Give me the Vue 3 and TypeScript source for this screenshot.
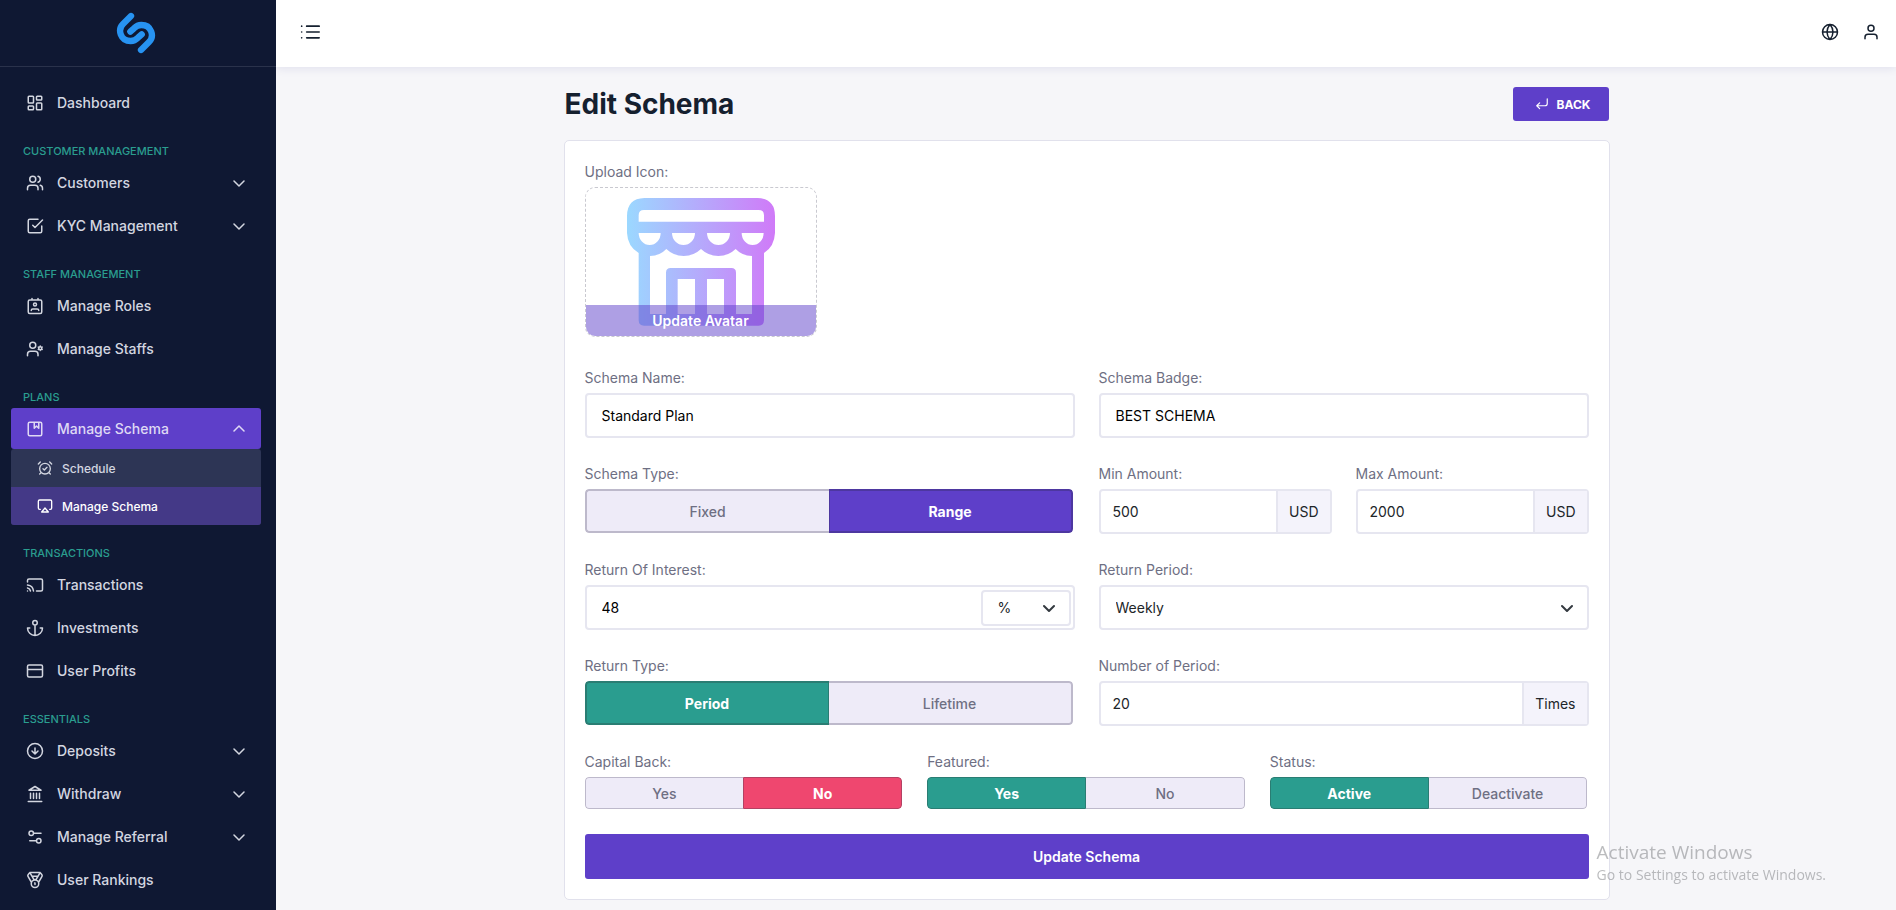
<script setup lang="ts">
import { ref } from 'vue'

interface NavItem {
  label: string
  icon: string
  expandable?: boolean
  open?: boolean
  children?: { label: string; icon: string; active?: boolean }[]
}
interface NavGroup {
  title?: string
  items: NavItem[]
}
interface Option {
  label: string
  tone: 'primary' | 'success' | 'danger'
}

const icons: Record<string, string> = {
  dashboard: 'M4 3h5a1 1 0 0 1 1 1v7a1 1 0 0 1-1 1H4a1 1 0 0 1-1-1V4a1 1 0 0 1 1-1zM15 3h5a1 1 0 0 1 1 1v3a1 1 0 0 1-1 1h-5a1 1 0 0 1-1-1V4a1 1 0 0 1 1-1zM15 12h5a1 1 0 0 1 1 1v7a1 1 0 0 1-1 1h-5a1 1 0 0 1-1-1v-7a1 1 0 0 1 1-1zM4 16h5a1 1 0 0 1 1 1v3a1 1 0 0 1-1 1H4a1 1 0 0 1-1-1v-3a1 1 0 0 1 1-1z',
  users: 'M16 21v-2a4 4 0 0 0-4-4H6a4 4 0 0 0-4 4v2M13 7a4 4 0 1 1-8 0a4 4 0 0 1 8 0zM22 21v-2a4 4 0 0 0-3-3.87M16 3.13a4 4 0 0 1 0 7.75',
  check: 'M9 11l3 3L22 4M21 12v7a2 2 0 0 1-2 2H5a2 2 0 0 1-2-2V5a2 2 0 0 1 2-2h11',
  contact: 'M17 18a2 2 0 0 0-2-2H9a2 2 0 0 0-2 2M5 4h14a2 2 0 0 1 2 2v14a2 2 0 0 1-2 2H5a2 2 0 0 1-2-2V6a2 2 0 0 1 2-2zM14 10a2 2 0 1 1-4 0a2 2 0 0 1 4 0zM8 2v2M16 2v2',
  staff: 'M2 21v-2a4 4 0 0 1 4-4h6a4 4 0 0 1 4 4v2M13 7a4 4 0 1 1-8 0a4 4 0 0 1 8 0zM21 11a2 2 0 1 1-4 0a2 2 0 0 1 4 0zM19 8v1M19 13v1M21.600 9.500l-.87.5M17.270 12l-.87.5M21.600 12.500l-.87-.5M17.270 10l-.87-.5',
  album: 'M5 3h14a2 2 0 0 1 2 2v14a2 2 0 0 1-2 2H5a2 2 0 0 1-2-2V5a2 2 0 0 1 2-2zM11 3v8l3-3l3 3V3',
  alarm: 'M20 13a8 8 0 1 1-16 0a8 8 0 0 1 16 0zM5 3L2 6M22 6l-3-3M6.380 18.700L4 21M17.640 18.670L20 21M9 13l2 2l4-4',
  airplay: 'M5 17H4a2 2 0 0 1-2-2V5a2 2 0 0 1 2-2h16a2 2 0 0 1 2 2v10a2 2 0 0 1-2 2h-1M12 15l5 6H7z',
  cast: 'M2 8V6a2 2 0 0 1 2-2h16a2 2 0 0 1 2 2v12a2 2 0 0 1-2 2h-6M2 12a9 9 0 0 1 8 8M2 16a5 5 0 0 1 4 4M2 20h.01',
  anchor: 'M15 5a3 3 0 1 1-6 0a3 3 0 0 1 6 0zM12 22V8M5 12H2a10 10 0 0 0 20 0h-3',
  card: 'M4 4h16a2 2 0 0 1 2 2v12a2 2 0 0 1-2 2H4a2 2 0 0 1-2-2V6a2 2 0 0 1 2-2zM2 10h20',
  deposit: 'M22 12a10 10 0 1 1-20 0a10 10 0 0 1 20 0zM8 12l4 4l4-4M12 8v8',
  landmark: 'M3 22h18M6 18v-7M10 18v-7M14 18v-7M18 18v-7M12 2l8 5H4z',
  sliders: 'M20 7h-9M14 17H5M20 17a3 3 0 1 1-6 0a3 3 0 0 1 6 0zM10 7a3 3 0 1 1-6 0a3 3 0 0 1 6 0z',
  medal: 'M7.210 15L2.660 7.140a2 2 0 0 1 .13-2.200L4.400 2.800A2 2 0 0 1 6 2h12a2 2 0 0 1 1.600.8l1.600 2.140a2 2 0 0 1 .14 2.200L16.790 15M11 12L5.120 2.200M13 12l5.880-9.800M8 7h8M17 17a5 5 0 1 1-10 0a5 5 0 0 1 10 0zM12 18v-2h-.5',
}

const groups: NavGroup[] = [
  { items: [{ label: 'Dashboard', icon: 'dashboard' }] },
  {
    title: 'Customer Management',
    items: [
      { label: 'Customers', icon: 'users', expandable: true },
      { label: 'KYC Management', icon: 'check', expandable: true },
    ],
  },
  {
    title: 'Staff Management',
    items: [
      { label: 'Manage Roles', icon: 'contact' },
      { label: 'Manage Staffs', icon: 'staff' },
    ],
  },
  {
    title: 'Plans',
    items: [
      {
        label: 'Manage Schema',
        icon: 'album',
        expandable: true,
        open: true,
        children: [
          { label: 'Schedule', icon: 'alarm' },
          { label: 'Manage Schema', icon: 'airplay', active: true },
        ],
      },
    ],
  },
  {
    title: 'Transactions',
    items: [
      { label: 'Transactions', icon: 'cast' },
      { label: 'Investments', icon: 'anchor' },
      { label: 'User Profits', icon: 'card' },
    ],
  },
  {
    title: 'Essentials',
    items: [
      { label: 'Deposits', icon: 'deposit', expandable: true },
      { label: 'Withdraw', icon: 'landmark', expandable: true },
      { label: 'Manage Referral', icon: 'sliders', expandable: true },
      { label: 'User Rankings', icon: 'medal' },
    ],
  },
]

const schemaTypes: Option[] = [
  { label: 'Fixed', tone: 'primary' },
  { label: 'Range', tone: 'primary' },
]
const returnTypes: Option[] = [
  { label: 'Period', tone: 'success' },
  { label: 'Lifetime', tone: 'success' },
]

const name = ref('Standard Plan')
const badge = ref('BEST SCHEMA')
const schemaType = ref('Range')
const minAmount = ref('500')
const maxAmount = ref('2000')
const interest = ref('48')
const interestUnit = ref('%')
const period = ref('Weekly')
const returnType = ref('Period')
const periodCount = ref('20')

const switches = ref([
  {
    label: 'Capital Back:',
    key: 'capital',
    value: 'No',
    options: [
      { label: 'Yes', tone: 'success' },
      { label: 'No', tone: 'danger' },
    ],
  },
  {
    label: 'Featured:',
    key: 'featured',
    value: 'Yes',
    options: [
      { label: 'Yes', tone: 'success' },
      { label: 'No', tone: 'danger' },
    ],
  },
  {
    label: 'Status:',
    key: 'status',
    value: 'Active',
    options: [
      { label: 'Active', tone: 'success' },
      { label: 'Deactivate', tone: 'danger' },
    ],
  },
])
</script>

<template>
  <div class="layout">
    <aside class="sidebar">
      <a class="brand" href="#" aria-label="Home">
        <svg class="logo" viewBox="348 36 120 126" aria-hidden="true">
          <path d="M393 48L369 72C352 89 361 123 392 123C403 123 409 118 414 113L425 103" />
          <path d="M423 150L447 126C464 109 455 75 424 75C413 75 407 80 402 85L391 95" />
        </svg>
      </a>
      <nav class="nav">
        <div v-for="(group, g) in groups" :key="g" class="group">
          <h2 v-if="group.title" class="category">{{ group.title }}</h2>
          <ul class="items">
            <li v-for="item in group.items" :key="item.label">
              <component
                :is="item.expandable ? 'button' : 'a'"
                class="item"
                :class="{ open: item.open }"
                :type="item.expandable ? 'button' : undefined"
                :href="item.expandable ? undefined : '#'"
              >
                <svg class="icon" viewBox="0 0 24 24" aria-hidden="true"><path :d="icons[item.icon]" /></svg>
                <span>{{ item.label }}</span>
                <svg v-if="item.expandable" class="chevron" viewBox="0 0 12 12" aria-hidden="true">
                  <path :d="item.open ? 'M1 8l5-5l5 5' : 'M1 4l5 5l5-5'" />
                </svg>
              </component>
              <ul v-if="item.children" class="submenu">
                <li v-for="child in item.children" :key="child.label">
                  <a href="#" class="subitem" :class="{ active: child.active }">
                    <svg class="subicon" viewBox="0 0 24 24" aria-hidden="true"><path :d="icons[child.icon]" /></svg>
                    <span>{{ child.label }}</span>
                  </a>
                </li>
              </ul>
            </li>
          </ul>
        </div>
      </nav>
    </aside>

    <div class="content">
      <header class="topbar">
        <button type="button" class="tool" aria-label="Toggle menu">
          <svg class="tool-list" viewBox="0 0 24 24" aria-hidden="true"><path d="M8 5h15M8 12h15M8 19h15M2 5h.01M2 12h.01M2 19h.01" /></svg>
        </button>
        <div class="tools">
          <button type="button" class="tool" aria-label="Language">
            <svg class="tool-icon" viewBox="0 0 24 24" aria-hidden="true"><path d="M22 12a10 10 0 1 1-20 0a10 10 0 0 1 20 0zM2 12h20M12 2a15.300 15.300 0 0 1 4 10a15.300 15.300 0 0 1-4 10a15.300 15.300 0 0 1-4-10a15.300 15.300 0 0 1 4-10z" /></svg>
          </button>
          <button type="button" class="tool" aria-label="Account">
            <svg class="tool-icon" viewBox="0 0 24 24" aria-hidden="true"><path d="M20 21v-2a4 4 0 0 0-4-4H8a4 4 0 0 0-4 4v2M16 7a4 4 0 1 1-8 0a4 4 0 0 1 8 0z" /></svg>
          </button>
        </div>
      </header>

      <main class="main">
        <div class="page">
          <div class="heading">
            <h1>Edit Schema</h1>
            <a href="#" class="back">
              <svg class="back-icon" viewBox="0 0 24 24" aria-hidden="true"><path d="M8 10l-5 5l5 5M21 3v8a4 4 0 0 1-4 4H3" /></svg>
              <span>BACK</span>
            </a>
          </div>

          <form class="card" @submit.prevent>
            <div class="upload-field">
              <label class="label" for="icon-file">Upload Icon:</label>
              <label class="upload" for="icon-file">
                <svg class="store" viewBox="264 414 444 384" aria-hidden="true">
                  <defs>
                    <linearGradient id="store-fill" gradientUnits="userSpaceOnUse" x1="264" y1="500" x2="708" y2="500">
                      <stop offset="0" stop-color="#9bd8ff" />
                      <stop offset="1" stop-color="#d07af8" />
                    </linearGradient>
                  </defs>
                  <path
                    fill="url(#store-fill)"
                    fill-rule="evenodd"
                    d="M316 414H656Q708 416 708 468V519Q706 560 675 579V781Q675 797 659 797H315Q299 797 299 781V579Q266 560 264 519V468Q264 416 316 414ZM315 450Q299 450 299 466V485H675V466Q675 450 659 450ZM299 519A33 36 0 0 0 365 519ZM399 519A34.500 36 0 0 0 468 519ZM504 519A34.500 36 0 0 0 573 519ZM608 519A33 36 0 0 0 674 519ZM333 588Q362 588 382 567Q404 588 434 588Q464 588 486 567Q508 588 538 588Q568 588 590 567Q610 588 639 588V762H591V638Q591 624 577 624H395Q381 624 381 638V762H333ZM416 657H468V762H416ZM504 657H555V762H504Z"
                  />
                </svg>
                <span class="upload-text">Update Avatar</span>
              </label>
              <input id="icon-file" class="hidden" type="file" accept="image/*" />
            </div>

            <div class="row two">
              <div>
                <label class="label" for="name">Schema Name:</label>
                <input id="name" v-model="name" class="control" type="text" />
              </div>
              <div>
                <label class="label" for="badge">Schema Badge:</label>
                <input id="badge" v-model="badge" class="control" type="text" />
              </div>
            </div>

            <div class="row two">
              <fieldset>
                <legend class="label">Schema Type:</legend>
                <div class="switch large">
                  <label v-for="o in schemaTypes" :key="o.label" :class="['choice', o.tone, { on: schemaType === o.label }]">
                    <input v-model="schemaType" class="hidden" type="radio" name="schema-type" :value="o.label" />{{ o.label }}
                  </label>
                </div>
              </fieldset>
              <div class="row two">
                <div>
                  <label class="label" for="min">Min Amount:</label>
                  <div class="addon"><input id="min" v-model="minAmount" type="text" /><span>USD</span></div>
                </div>
                <div>
                  <label class="label" for="max">Max Amount:</label>
                  <div class="addon"><input id="max" v-model="maxAmount" type="text" /><span>USD</span></div>
                </div>
              </div>
            </div>

            <div class="row two">
              <div>
                <label class="label" for="interest">Return Of Interest:</label>
                <div class="control combo">
                  <input id="interest" v-model="interest" type="text" />
                  <div class="select unit">
                    <select v-model="interestUnit" aria-label="Interest unit">
                      <option>%</option>
                      <option>$</option>
                    </select>
                    <svg class="chevron" viewBox="0 0 12 12" aria-hidden="true"><path d="M1 4l5 5l5-5" /></svg>
                  </div>
                </div>
              </div>
              <div>
                <label class="label" for="period">Return Period:</label>
                <div class="select">
                  <select id="period" v-model="period">
                    <option>Daily</option>
                    <option>Weekly</option>
                    <option>Monthly</option>
                  </select>
                  <svg class="chevron" viewBox="0 0 12 12" aria-hidden="true"><path d="M1 4l5 5l5-5" /></svg>
                </div>
              </div>
            </div>

            <div class="row two">
              <fieldset>
                <legend class="label">Return Type:</legend>
                <div class="switch large">
                  <label v-for="o in returnTypes" :key="o.label" :class="['choice', o.tone, { on: returnType === o.label }]">
                    <input v-model="returnType" class="hidden" type="radio" name="return-type" :value="o.label" />{{ o.label }}
                  </label>
                </div>
              </fieldset>
              <div>
                <label class="label" for="count">Number of Period:</label>
                <div class="addon"><input id="count" v-model="periodCount" type="text" /><span>Times</span></div>
              </div>
            </div>

            <div class="row three">
              <fieldset v-for="s in switches" :key="s.key">
                <legend class="label">{{ s.label }}</legend>
                <div class="switch">
                  <label v-for="o in s.options" :key="o.label" :class="['choice', o.tone, { on: s.value === o.label }]">
                    <input v-model="s.value" class="hidden" type="radio" :name="s.key" :value="o.label" />{{ o.label }}
                  </label>
                </div>
              </fieldset>
            </div>

            <button type="submit" class="submit">Update Schema</button>
          </form>
        </div>
      </main>
    </div>

    <div class="watermark">
      <p class="watermark-title">Activate Windows</p>
      <p class="watermark-text">Go to Settings to activate Windows.</p>
    </div>
  </div>
</template>

<style>
html,
body {
  background: #f6f6f9;
}
</style>

<style scoped>
* {
  box-sizing: border-box;
}
.layout {
  display: grid;
  grid-template-columns: 276px 1fr;
  min-height: 100vh;
  font-family: Inter, 'Liberation Sans', sans-serif;
  font-size: 14px;
  color: #15202f;
}
ul,
h1,
h2,
p {
  list-style: none;
  margin: 0;
  padding: 0;
}
a {
  text-decoration: none;
}
button,
input,
select {
  font: inherit;
  color: inherit;
  margin: 0;
}
svg {
  display: block;
  flex: none;
}
svg path {
  stroke-linecap: round;
  stroke-linejoin: round;
}

.sidebar {
  position: relative;
  z-index: 1;
  background: #0f1833;
}
.brand {
  display: flex;
  justify-content: center;
  align-items: center;
  height: 67px;
  padding-right: 4px;
  border-bottom: 1px solid #2a324b;
}
.logo {
  width: 40px;
  height: 42px;
  fill: none;
  stroke: #2793f2;
  stroke-width: 19;
}
.nav {
  padding: 15px 15px 0 11px;
}
.category {
  padding: 19px 12px 3px;
  font-size: 11px;
  line-height: 15px;
  font-weight: 500;
  text-transform: uppercase;
  color: #2a9d8f;
}
.items > li {
  padding-bottom: 2px;
}
.item {
  display: flex;
  align-items: center;
  gap: 13px;
  width: 100%;
  height: 41px;
  padding: 0 16px 0 15px;
  border: 0;
  border-radius: 3px;
  background: none;
  color: #d3d6e0;
  font-size: 14px;
  font-weight: 500;
  text-align: left;
}
.item.open {
  background: #5e3fc9;
  color: #dfd9f4;
}
.icon,
.subicon {
  width: 18px;
  height: 18px;
  fill: none;
  stroke: currentColor;
  stroke-width: 2;
}
.chevron {
  width: 12px;
  height: 12px;
  margin-left: auto;
  fill: none;
  stroke: currentColor;
  stroke-width: 1.5;
}
.submenu {
  border-radius: 3px;
  overflow: hidden;
  background: #2d3555;
}
.subitem {
  display: flex;
  align-items: center;
  gap: 9px;
  height: 38px;
  padding-left: 26px;
  color: #d3d6e0;
  font-size: 12px;
  font-weight: 500;
}
.subicon {
  width: 16px;
  height: 16px;
}
.subitem.active {
  background: #443987;
  color: #fff;
}

.content {
  display: flex;
  flex-direction: column;
  min-width: 0;
}
.topbar {
  display: flex;
  justify-content: space-between;
  align-items: center;
  height: 67px;
  padding: 0 16px 3px 24px;
  background: #fff;
  box-shadow: 0 2px 8px #e2e2ee;
}
.tools {
  display: flex;
  gap: 23px;
}
.tool {
  padding: 0;
  border: 0;
  background: none;
  color: #15202f;
}
.tool-icon,
.tool-list {
  width: 20px;
  height: 20px;
  fill: none;
  stroke: currentColor;
  stroke-width: 2;
}
.tool-icon {
  width: 18px;
  height: 18px;
}
.main {
  display: grid;
  grid-template-columns: 1fr 4fr 1fr;
  padding: 20px 7px 0 8px;
}
.page {
  grid-column: 2;
  padding: 0 12px 10px;
}
.heading {
  display: flex;
  justify-content: space-between;
  align-items: center;
  height: 34px;
  margin-bottom: 19px;
  padding: 0 1px;
}
h1 {
  font-size: 28px;
  line-height: 34px;
  font-weight: 700;
}
.back {
  display: flex;
  align-items: center;
  gap: 8px;
  height: 34px;
  padding: 0 18px 0 22px;
  border-radius: 3px;
  background: #5e3fc9;
  color: #fff;
  font-size: 12px;
  font-weight: 700;
}
.back-icon {
  width: 14px;
  height: 14px;
  fill: none;
  stroke: currentColor;
  stroke-width: 2;
}
.card {
  display: grid;
  gap: 25px;
  padding: 20px;
  background: #fff;
  border: 1px solid #e1e1ec;
  border-radius: 5px;
}
.row {
  display: grid;
  gap: 24px;
}
.two {
  grid-template-columns: repeat(2, minmax(0, 1fr));
}
.three {
  grid-template-columns: repeat(3, minmax(0, 1fr));
}
fieldset {
  min-width: 0;
  margin: 0;
  padding: 0;
  border: 0;
}
.label {
  display: block;
  padding: 0 0 4px;
  line-height: 22px;
  color: #6e6f83;
}
.hidden {
  position: absolute;
  width: 1px;
  height: 1px;
  opacity: 0;
}
.upload-field {
  padding-bottom: 5px;
}
.upload {
  position: relative;
  display: flex;
  justify-content: center;
  align-items: center;
  width: 232px;
  height: 150px;
  border: 1px dashed #c9c9d0;
  border-radius: 10px;
  overflow: hidden;
}
.store {
  width: 148px;
  height: 128px;
}
.upload-text {
  position: absolute;
  inset: auto 0 0;
  line-height: 31px;
  text-align: center;
  font-weight: 600;
  color: #fff;
  background: rgba(94, 63, 201, 0.5);
}
.control,
.select,
.addon {
  display: flex;
  align-items: center;
  width: 100%;
  height: 45px;
  border: 2px solid #e6e6f0;
  border-radius: 4px;
  background: #fff;
}
.control {
  padding: 0 15px;
  color: #000;
}
.combo {
  padding-right: 2px;
}
.combo input {
  flex: 1;
  min-width: 0;
  padding: 0;
  border: 0;
  background: none;
}
.select {
  display: grid;
}
.select select,
.select .chevron {
  grid-area: 1 / 1;
}
.select select {
  width: 100%;
  height: 100%;
  padding: 0 15px;
  border: 0;
  background: none;
  appearance: none;
  color: #212529;
}
.select .chevron {
  justify-self: end;
  margin-right: 14px;
  stroke: #343a40;
  stroke-width: 2;
  pointer-events: none;
}
.unit {
  width: 90px;
  height: 36px;
}
.addon input {
  flex: 1;
  min-width: 0;
  height: 100%;
  padding: 0 12px;
  border: 0;
  background: none;
  color: #212529;
}
.addon span {
  height: 100%;
  padding: 0 11px;
  line-height: 41px;
  border-left: 2px solid #e6e6f0;
  background: #f4f3fb;
  color: #212529;
}
.switch {
  display: grid;
  grid-template-columns: 1fr 1fr;
  margin-right: 1px;
  height: 32px;
  border-radius: 4px;
  overflow: hidden;
}
.large {
  height: 44px;
  margin: 0 2px 1px 0;
}
.choice {
  display: flex;
  justify-content: center;
  align-items: center;
  border: 1px solid #bdb9cb;
  background: #eeebf8;
  color: #6e6f83;
  font-weight: 500;
}
.large .choice {
  border-width: 2px;
}
.choice:first-child {
  border-right-width: 0;
  border-radius: 4px 0 0 4px;
}
.choice:last-child {
  border-left-width: 0;
  border-radius: 0 4px 4px 0;
}
.choice.on {
  color: #fff;
  font-weight: 700;
}
.choice.on:first-child {
  border-right-width: 1px;
}
.choice.on:last-child {
  border-left-width: 1px;
}
.choice.on.primary {
  background: #5e3fc9;
  border-color: #4d37a0;
}
.choice.on.success {
  background: #2a9d8f;
  border-color: #2a7d73;
}
.choice.on.danger {
  background: #ef476f;
  border-color: #b34163;
}
.submit {
  height: 45px;
  border: 0;
  border-radius: 3px;
  background: #5e3fc9;
  color: #fff;
  font-weight: 600;
}
.watermark {
  position: fixed;
  right: 70px;
  bottom: 25px;
  font-family: 'Open Sans', 'Noto Sans', sans-serif;
  color: rgba(120, 122, 126, 0.5);
}
.watermark-title {
  font-size: 19px;
  line-height: 26px;
}
.watermark-text {
  font-size: 14px;
  line-height: 20px;
}
</style>
